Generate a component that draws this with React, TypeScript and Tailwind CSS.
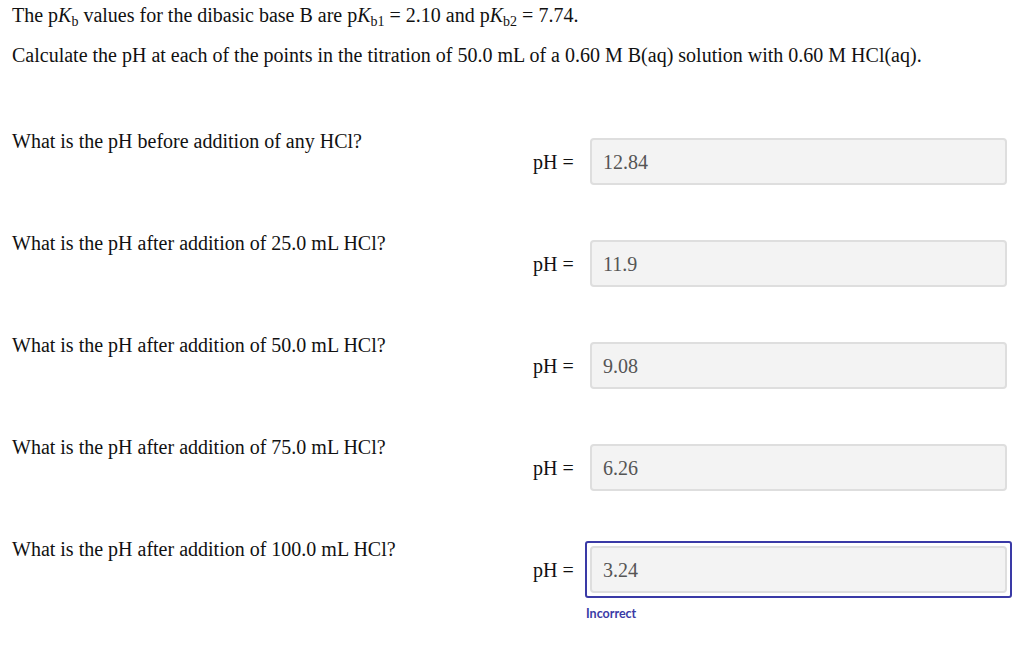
const rows = [
  { q: "What is the pH before addition of any HCl?", v: "12.84" },
  { q: "What is the pH after addition of 25.0 mL HCl?", v: "11.9" },
  { q: "What is the pH after addition of 50.0 mL HCl?", v: "9.08" },
  { q: "What is the pH after addition of 75.0 mL HCl?", v: "6.26" },
  { q: "What is the pH after addition of 100.0 mL HCl?", v: "3.24", wrong: true },
];

const Kb = ({ sub }: { sub: string }) => (
  <span>
    p<i>K</i>
    <span className="relative top-[4px] text-[14px] leading-none">{sub}</span>
  </span>
);

const Eq = () => <span className="mx-[5px]">=</span>;

const App = () => {
  return (
    <div className="min-h-[651px] bg-white text-[20px] text-[#111] font-['Liberation_Serif',serif] pl-3 pt-[3px]">
      <p className="leading-6">
        The <Kb sub="b" /> values for the dibasic base B are <Kb sub="b1" />
        <Eq />
        2.10 and <Kb sub="b2" />
        <Eq />
        7.74.
      </p>
      <p className="leading-6 mt-4">
        Calculate the pH at each of the points in the titration of 50.0 mL of a 0.60 M B(aq) solution with 0.60 M
        HCl(aq).
      </p>

      <div className="mt-[62px] flex flex-col">
        {rows.map((r) => (
          <div key={r.q} className="flex h-[102px]">
            <div className="w-[521px] leading-6">{r.q}</div>
            <div className="flex flex-col pt-[4px]">
              <div className="flex items-center">
                <span className="w-[45px] whitespace-nowrap leading-6">
                  pH
                  <Eq />
                </span>
                <div
                  className={
                    r.wrong
                      ? "ml-[7px] w-[427px] rounded-[3px] border-2 border-[#3a3aa6] p-[3px]"
                      : "ml-[7px] w-[427px] rounded-[3px] border-2 border-transparent p-[3px]"
                  }
                >
                  <div className="h-[47px] rounded-[4px] border-2 border-[#dedede] bg-[#f3f3f3] pl-[11px] flex items-center text-[#555]">
                    {r.v}
                  </div>
                </div>
              </div>
              {r.wrong && (
                <div className="ml-[53px] mt-[7px] text-[12.5px] font-bold text-[#3a3aa6] font-['Lato',sans-serif]">
                  Incorrect
                </div>
              )}
            </div>
          </div>
        ))}
      </div>
    </div>
  );
};

export default App;
